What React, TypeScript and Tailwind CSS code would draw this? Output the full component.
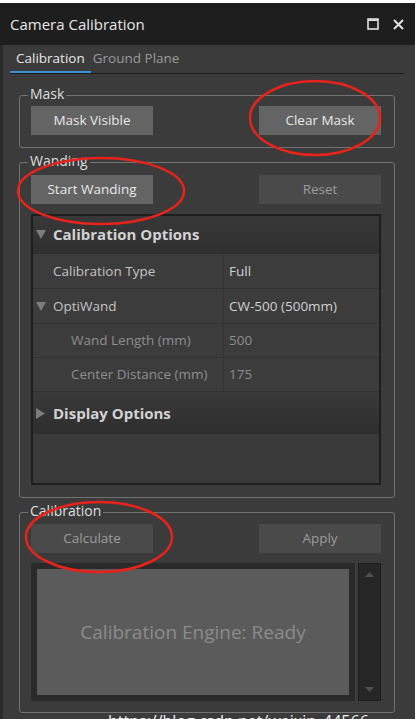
import React from "react";

const font = { fontFamily: '"Open Sans", "Noto Sans", "Liberation Sans", sans-serif' };

function Group({ label, className, children }: { label: string; className?: string; children: React.ReactNode }) {
  return (
    <div className={"relative mx-[16px] rounded-[3px] border border-[#727272] " + (className || "")}>
      <span className="absolute left-[8px] top-[-11px] bg-[#3b3b3b] px-[2px] text-[14px] leading-[18px] text-[#dedede]">{label}</span>
      {children}
    </div>
  );
}

function Btn({ children, variant }: { children: React.ReactNode; variant: "on" | "off" }) {
  return (
    <div
      className={
        "flex h-[29px] w-[122px] items-center justify-center text-[13.5px] " +
        (variant === "on" ? "bg-[#646464] text-[#e8e8e8]" : "bg-[#4a4a4a] text-[#9c9c9c]")
      }
    >
      {children}
    </div>
  );
}

function TriDown() {
  return (
    <svg width="10" height="9" viewBox="0 0 10 9" className="ml-[3px] mr-[7px]">
      <path d="M0 0 L10 0 L5 9 Z" fill="#7c7c7c" />
    </svg>
  );
}

function TriRight() {
  return (
    <svg width="10" height="11" viewBox="0 0 10 11" className="ml-[3px] mr-[7px]">
      <path d="M0 0 L9 5.5 L0 11 Z" fill="#7c7c7c" />
    </svg>
  );
}

function Row({ name, value, indent, tri, dim, h }: { name: string; value: string; indent?: boolean; tri?: boolean; dim?: boolean; h: string }) {
  return (
    <div className={"flex border-b border-[#323232] bg-[#3c3c3c] text-[13.5px] " + h}>
      <div className="flex w-[191px] items-center border-r border-[#323232]">
        {tri ? <TriDown /> : <span className="w-[20px]" />}
        <span className={(indent ? "pl-[18px] " : "") + (dim ? "text-[#8e8e8e]" : "text-[#c4c4c4]")}>{name}</span>
      </div>
      <div className={"flex items-center pl-[5px] " + (dim ? "text-[#8e8e8e]" : "text-[#d0d0d0]")}>{value}</div>
    </div>
  );
}

export default function App() {
  return (
    <div className="relative h-[719px] w-[415px] overflow-hidden bg-white" style={font}>
      <div className="h-[3px] bg-white" />
      <div className="flex h-[42px] items-center justify-between bg-[#1e1e1e] pl-[10px] pr-[11px]">
        <span className="text-[15px] text-[#e6e6e6]">Camera Calibration</span>
        <div className="flex items-center gap-[14px]">
          <svg width="12" height="12" viewBox="0 0 12 12">
            <rect x="1" y="1" width="10" height="10" fill="none" stroke="#e0e0e0" strokeWidth="1.6" />
            <line x1="1" y1="2.2" x2="11" y2="2.2" stroke="#e0e0e0" strokeWidth="1.6" />
          </svg>
          <svg width="11" height="11" viewBox="0 0 11 11">
            <path d="M1 1 L10 10 M10 1 L1 10" stroke="#e0e0e0" strokeWidth="2" />
          </svg>
        </div>
      </div>
      <div className="h-[674px] border-l-[3px] border-[#2a2a2a] bg-[#3b3b3b] pr-[4px]">
        <div className="mx-[7px] flex h-[29px] items-end border-b border-[#1c1c1c]">
          <div className="border-b-2 border-[#3d8fd6] px-[6px] pb-[3px] text-[13.5px] text-[#e8e8e8]">Calibration</div>
          <div className="px-[2px] pb-[5px] text-[13.5px] text-[#9a9a9a]">Ground Plane</div>
        </div>

        <Group label="Mask" className="mt-[21px] h-[53px]">
          <div className="flex justify-between pl-[11px] pr-[13px] pt-[10px]">
            <Btn variant="on">Mask Visible</Btn>
            <Btn variant="on">Clear Mask</Btn>
          </div>
        </Group>

        <Group label="Wanding" className="mt-[14px] h-[336px]">
          <div className="flex justify-between pl-[11px] pr-[13px] pt-[12px]">
            <Btn variant="on">Start Wanding</Btn>
            <Btn variant="off">Reset</Btn>
          </div>
          <div className="ml-[11px] mr-[13px] mt-[10px] flex h-[271px] flex-col border-2 border-[#1e1e1e] bg-[#3a3a3a]">
            <div className="flex h-[38px] shrink-0 items-center border-b border-[#2e2e2e] bg-gradient-to-b from-[#383838] to-[#303030]">
              <TriDown />
              <span className="text-[15px] font-bold text-[#d2d2d2]">Calibration Options</span>
            </div>
            <Row name="Calibration Type" value="Full" h="h-[35px] shrink-0" />
            <Row name="OptiWand" value="CW-500 (500mm)" tri h="h-[35px] shrink-0" />
            <Row name="Wand Length (mm)" value="500" indent dim h="h-[34px] shrink-0" />
            <Row name="Center Distance (mm)" value="175" indent dim h="h-[34px] shrink-0" />
            <div className="flex h-[42px] shrink-0 items-center bg-gradient-to-b from-[#393939] to-[#2e2e2e]">
              <TriRight />
              <span className="text-[15px] font-bold text-[#d2d2d2]">Display Options</span>
            </div>
          </div>
        </Group>

        <Group label="Calibration" className="mt-[14px] h-[201px]">
          <div className="flex justify-between pl-[11px] pr-[13px] pt-[11px]">
            <Btn variant="off">Calculate</Btn>
            <Btn variant="off">Apply</Btn>
          </div>
          <div className="ml-[11px] mr-[13px] mt-[10px] flex h-[138px] gap-[3px]">
            <div className="flex flex-1 border-[6px] border-[#2a2a2a] bg-[#5b5b5b]">
              <div className="flex flex-1 items-center justify-center text-[19px] text-[#8c8c8c]">Calibration Engine: Ready</div>
            </div>
            <div className="flex w-[23px] flex-col items-center justify-between border border-[#1c1c1c] bg-[#262626] py-[8px]">
              <svg width="9" height="5" viewBox="0 0 9 5"><path d="M0 5 L4.5 0 L9 5 Z" fill="#505050" /></svg>
              <svg width="9" height="5" viewBox="0 0 9 5"><path d="M0 0 L4.5 5 L9 0 Z" fill="#505050" /></svg>
            </div>
          </div>
        </Group>
        <div className="mt-[0px] pl-[105px] text-[16px] leading-[16px] whitespace-nowrap text-[#f0f0f0]">https://blog.csdn.net/weixin_44566</div>
      </div>

      <svg className="pointer-events-none absolute left-0 top-0" width="415" height="719">
        <ellipse cx="315" cy="118" rx="65" ry="37" fill="none" stroke="#e8231b" strokeWidth="2.5" />
        <ellipse cx="101" cy="191" rx="83" ry="33" fill="none" stroke="#e8231b" strokeWidth="2.5" />
        <ellipse cx="99" cy="537" rx="73" ry="35" fill="none" stroke="#e8231b" strokeWidth="2.5" />
      </svg>
    </div>
  );
}
